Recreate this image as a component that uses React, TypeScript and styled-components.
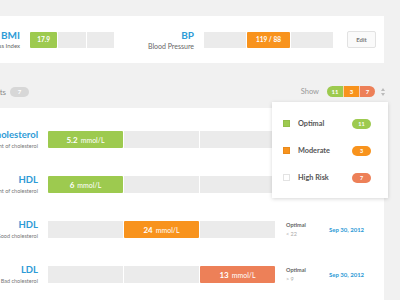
import styled, { createGlobalStyle } from 'styled-components';

const GREEN = '#9dca4f';
const ORANGE = '#f8931d';
const SALMON = '#ed8058';
const BLUE = '#2e9bd6';
const TRACK = '#ebebeb';

const GlobalStyle = createGlobalStyle`
  html, body {
    margin: 0;
    padding: 0;
    background: #f1f1f1;
    overflow: hidden;
  }
  body {
    width: 400px;
    height: 300px;
    font-family: Lato, "Open Sans", sans-serif;
  }
`;

// the layout is wider than the window and starts off-screen on the left
const Page = styled.div`
  width: 490px;
  margin-left: -100px;
  padding-top: 16px;
`;

const SummaryCard = styled.div`
  width: 484px;
  height: 47px;
  box-sizing: border-box;
  background: #fff;
  display: flex;
  align-items: center;
  padding: 0 8px 0 10px;
`;

const MetricLabel = styled.div<{ $grow?: boolean }>`
  width: ${p => (p.$grow ? 'auto' : '110px')};
  flex: ${p => (p.$grow ? 1 : 'none')};
  text-align: right;
  white-space: nowrap;
`;

const MetricName = styled.div`
  color: ${BLUE};
  font-weight: 700;
  font-size: 10px;
  line-height: 12px;
`;

const MetricSub = styled.div<{ $small?: boolean }>`
  color: #666;
  font-size: ${p => (p.$small ? '6px' : '7px')};
  line-height: 10px;
`;

const Bar = styled.div<{ $width: number; $height: number }>`
  display: flex;
  gap: 1px;
  width: ${p => p.$width}px;
  height: ${p => p.$height}px;
  margin-left: 10px;
  flex: none;
`;

const Segment = styled.div<{ $color?: string }>`
  flex: 1;
  background: ${p => p.$color ?? TRACK};
  border-radius: ${p => (p.$color ? '1px' : '0')};
  display: flex;
  align-items: center;
  justify-content: center;
  color: #fff;
  font-size: 6.5px;
  font-weight: 700;
  white-space: nowrap;
`;

const Value = styled.span`
  font-weight: 700;
  font-size: 8px;
  margin-right: 3px;
`;

const Unit = styled.span`
  font-weight: 400;
  font-size: 7px;
`;

const EditButton = styled.button`
  margin-left: 14px;
  width: 29px;
  height: 17px;
  padding: 0;
  border: 1px solid #e2e2e2;
  border-radius: 2px;
  background: #fafafa;
  color: #777;
  font-family: inherit;
  font-size: 6px;
  font-weight: 700;
`;

const ListHeader = styled.div`
  display: flex;
  justify-content: space-between;
  align-items: center;
  height: 11px;
  margin-top: 23px;
  padding-right: 5px;
`;

const ListTitle = styled.div`
  display: flex;
  align-items: center;
`;

const TitleText = styled.div`
  width: 106px;
  text-align: right;
  color: #8a8a8a;
  font-size: 8px;
`;

const CountPill = styled.div`
  margin-left: 4px;
  width: 19px;
  height: 10px;
  border-radius: 5px;
  background: #d7d7d7;
  color: #fff;
  font-size: 6px;
  font-weight: 700;
  display: flex;
  align-items: center;
  justify-content: center;
`;

const FilterGroup = styled.div`
  position: relative;
  display: flex;
  align-items: center;
  height: 11px;
`;

const ShowLabel = styled.span`
  color: #999;
  font-size: 7.5px;
  margin-right: 8px;
`;

const FilterPills = styled.div`
  display: flex;
  height: 11px;
  border-radius: 6px;
  overflow: hidden;
`;

const FilterPill = styled.div<{ $color: string; $w: number }>`
  width: ${p => p.$w}px;
  background: ${p => p.$color};
  color: #fff;
  font-size: 6px;
  font-weight: 700;
  display: flex;
  align-items: center;
  justify-content: center;
  & + & {
    border-left: 1px solid rgba(255, 255, 255, 0.6);
  }
`;

const SortIcon = styled.svg`
  margin-left: 6px;
  display: block;
`;

const Dropdown = styled.div`
  position: absolute;
  top: 16px;
  right: -3px;
  width: 116px;
  height: 96px;
  box-sizing: border-box;
  padding: 8px 0;
  background: #fff;
  box-shadow: 0 1px 4px rgba(0, 0, 0, 0.16);
  z-index: 2;
`;

const DropItem = styled.div`
  display: flex;
  align-items: center;
  height: 27px;
  padding: 0 17px 0 11px;
`;

const Check = styled.div<{ $color?: string }>`
  width: 7px;
  height: 7px;
  box-sizing: border-box;
  background: ${p => p.$color ?? '#fff'};
  border: 1px solid ${p => (p.$color ? 'rgba(0,0,0,0.06)' : '#e3e3e3')};
`;

const DropLabel = styled.div`
  flex: 1;
  margin-left: 8px;
  color: #555;
  font-size: 7.3px;
  font-weight: 700;
`;

const DropBadge = styled.div<{ $color: string }>`
  width: 19px;
  height: 10px;
  border-radius: 5px;
  background: ${p => p.$color};
  color: #fff;
  font-size: 5.5px;
  font-weight: 700;
  display: flex;
  align-items: center;
  justify-content: center;
`;

const ResultsCard = styled.div`
  width: 484px;
  min-height: 200px;
  margin-top: 11px;
  padding-top: 9px;
  background: #fff;
`;

const Row = styled.div`
  display: flex;
  align-items: center;
  height: 45px;
`;

const RowLabel = styled.div`
  width: 128px;
  margin-left: 10px;
  text-align: right;
  white-space: nowrap;
`;

const RowName = styled.div`
  color: ${BLUE};
  font-weight: 700;
  font-size: 9.5px;
  line-height: 12px;
`;

const RowSub = styled.div`
  color: #777;
  font-size: 5.5px;
  line-height: 10px;
`;

const Range = styled.div`
  margin-left: 11px;
  width: 43px;
`;

const RangeName = styled.div`
  color: #666;
  font-size: 5.5px;
  font-weight: 700;
  line-height: 9px;
`;

const RangeValue = styled.div`
  color: #aaa;
  font-size: 5.5px;
  line-height: 9px;
`;

const DateText = styled.div`
  color: ${BLUE};
  font-size: 6px;
  font-weight: 700;
`;

type Result = {
  name: string;
  sub: string;
  value: string;
  level: number;
  range: string;
};

const LEVEL_COLORS = [GREEN, ORANGE, SALMON];

const results: Result[] = [
  { name: 'Total Cholesterol', sub: 'Total amount of cholesterol', value: '5.2', level: 0, range: '< 5.2' },
  { name: 'HDL', sub: 'Amount of cholesterol', value: '6', level: 0, range: '> 4' },
  { name: 'HDL', sub: 'Good cholesterol', value: '24', level: 1, range: '< 22' },
  { name: 'LDL', sub: 'Bad cholesterol', value: '13', level: 2, range: '> 9' },
];

const filters = [
  { label: 'Optimal', count: 11, color: GREEN, checked: true },
  { label: 'Moderate', count: 3, color: ORANGE, checked: true },
  { label: 'High Risk', count: 7, color: SALMON, checked: false },
];

export default function App() {
  return (
    <>
      <GlobalStyle />
      <Page>
        {/* Summary */}
        <SummaryCard>
          <MetricLabel>
            <MetricName>BMI</MetricName>
            <MetricSub $small>Body Mass Index</MetricSub>
          </MetricLabel>
          <Bar $width={84} $height={16}>
            <Segment $color={GREEN}>17.9</Segment>
            <Segment />
            <Segment />
          </Bar>
          <MetricLabel $grow>
            <MetricName>BP</MetricName>
            <MetricSub>Blood Pressure</MetricSub>
          </MetricLabel>
          <Bar $width={129} $height={16}>
            <Segment />
            <Segment $color={ORANGE}>119 / 88</Segment>
            <Segment />
          </Bar>
          <EditButton>Edit</EditButton>
        </SummaryCard>

        {/* List header */}
        <ListHeader>
          <ListTitle>
            <TitleText>Lab Tests</TitleText>
            <CountPill>7</CountPill>
          </ListTitle>
          <FilterGroup>
            <ShowLabel>Show</ShowLabel>
            <FilterPills>
              <FilterPill $color={GREEN} $w={16}>11</FilterPill>
              <FilterPill $color={ORANGE} $w={15}>3</FilterPill>
              <FilterPill $color={SALMON} $w={15}>7</FilterPill>
            </FilterPills>
            <SortIcon width="4" height="8" viewBox="0 0 4 8">
              <path d="M2 0 L4 3 L0 3 Z M2 8 L4 5 L0 5 Z" fill="#bbb" />
            </SortIcon>
            <Dropdown>
              {filters.map(f => (
                <DropItem key={f.label}>
                  <Check $color={f.checked ? f.color : undefined} />
                  <DropLabel>{f.label}</DropLabel>
                  <DropBadge $color={f.color}>{f.count}</DropBadge>
                </DropItem>
              ))}
            </Dropdown>
          </FilterGroup>
        </ListHeader>

        {/* Results */}
        <ResultsCard>
          {results.map((r, i) => (
            <Row key={i}>
              <RowLabel>
                <RowName>{r.name}</RowName>
                <RowSub>{r.sub}</RowSub>
              </RowLabel>
              <Bar $width={227} $height={17}>
                {[0, 1, 2].map(s => (
                  <Segment key={s} $color={s === r.level ? LEVEL_COLORS[s] : undefined}>
                    {s === r.level && (
                      <>
                        <Value>{r.value}</Value>
                        <Unit>mmol/L</Unit>
                      </>
                    )}
                  </Segment>
                ))}
              </Bar>
              <Range>
                <RangeName>Optimal</RangeName>
                <RangeValue>{r.range}</RangeValue>
              </Range>
              <DateText>Sep 30, 2012</DateText>
            </Row>
          ))}
        </ResultsCard>
      </Page>
    </>
  );
}
